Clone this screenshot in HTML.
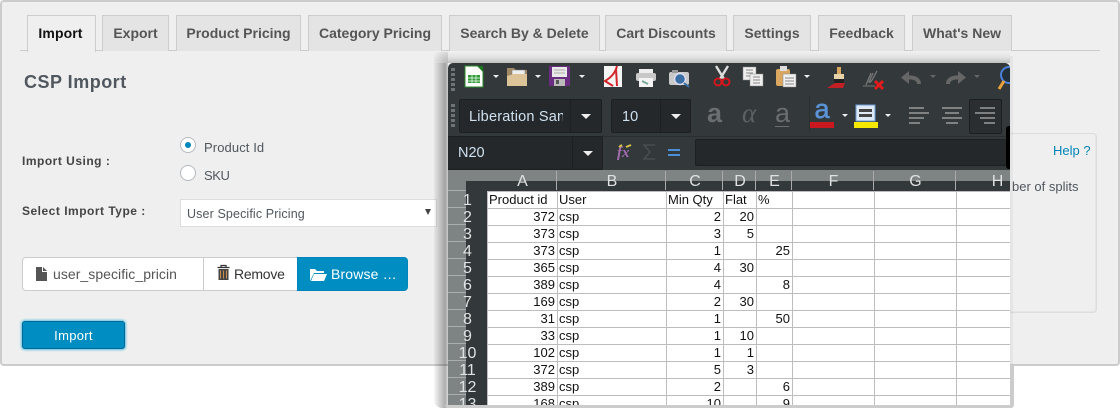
<!DOCTYPE html>
<html><head><meta charset="utf-8"><style>
*{box-sizing:border-box}
html,body{margin:0;padding:0;width:1120px;height:409px;overflow:hidden;background:#fff;font-family:"Liberation Sans",sans-serif}
.a{position:absolute;white-space:nowrap}
#panel{left:0;top:0;width:1120px;height:366px;background:#efefef;border:2px solid #ccc;border-radius:4px}
.tab{position:absolute;top:15px;height:36px;background:#e4e4e4;border:1px solid #ccc;border-bottom:none;font-weight:bold;font-size:14px;color:#555;text-align:center;line-height:34px}
.t{color:#50575e;font-size:13px}
.b{font-weight:bold;font-size:12px;color:#444;letter-spacing:.5px}
.radio{position:absolute;width:16px;height:16px;border-radius:50%;background:#fff;border:1px solid #b4b9be}
#win{left:448px;top:63px;width:562px;height:342px;background:#33383b;overflow:hidden;border-radius:5px 5px 0 0}
table{border-collapse:collapse;table-layout:fixed;position:absolute;left:39px;top:128px;background:#fff;font-size:13px;color:#111}
td{border:1px solid #bdbdbd;height:17px;padding:0 1px;line-height:14px;overflow:hidden;white-space:nowrap}
td.r{text-align:right;padding-right:2px}
.hc{position:absolute;top:108px;color:#dfe2e2;font-size:16px;text-align:center;height:19px;line-height:21px;border-right:1px solid #aaa;padding-left:2px}
.rn{position:absolute;left:0;width:39px;height:17px;text-align:center;color:#dfe2e2;font-size:16px;line-height:18px}
.dark{background:#24282b;border:1px solid #1c2022;border-radius:2px;color:#cfe0ef;font-size:14px;position:absolute}
.ar{position:absolute;width:0;height:0;border-left:3px solid transparent;border-right:3px solid transparent;border-top:3px solid #eee}
.ar2{position:absolute;width:0;height:0;border-left:5px solid transparent;border-right:5px solid transparent;border-top:5px solid #eee}
svg{position:absolute;overflow:visible}
</style></head><body>
<div class="a" id="panel"></div>
<div class="a" style="left:20px;top:50px;width:1080px;height:1px;background:#ccc"></div>
<div class="tab" style="left:27px;width:69px;background:#efefef;color:#111;height:37px;z-index:2;padding-right:2px;letter-spacing:.1px">Import</div>
<div class="tab" style="left:102px;width:67px">Export</div>
<div class="tab" style="left:176px;width:125px">Product Pricing</div>
<div class="tab" style="left:308px;width:134px">Category Pricing</div>
<div class="tab" style="left:449px;width:151px">Search By &amp; Delete</div>
<div class="tab" style="left:605px;width:122px">Cart Discounts</div>
<div class="tab" style="left:733px;width:78px">Settings</div>
<div class="tab" style="left:818px;width:87px">Feedback</div>
<div class="tab" style="left:912px;width:100px">What's New</div>

<div class="a" style="left:24px;top:72px;font-size:18px;font-weight:bold;color:#50575e;letter-spacing:.5px">CSP Import</div>
<div class="a b" style="left:22px;top:154px">Import Using :</div>
<div class="radio" style="left:180px;top:137px"></div>
<div class="a" style="left:185px;top:142px;width:6px;height:6px;border-radius:50%;background:#0085ba"></div>
<div class="a t" style="left:204px;top:140px;letter-spacing:.1px">Product Id</div>
<div class="radio" style="left:180px;top:165px"></div>
<div class="a t" style="left:204px;top:168px;letter-spacing:-.4px">SKU</div>
<div class="a b" style="left:22px;top:204px">Select Import Type :</div>
<div class="a" style="left:180px;top:199px;width:257px;height:28px;background:#fff;border:1px solid #ddd"></div>
<div class="a" style="left:187px;top:207px;font-size:12.5px;color:#50575e;letter-spacing:.12px">User Specific Pricing</div>
<div class="a" style="left:425px;top:209px;width:0;height:0;border-left:3px solid transparent;border-right:3px solid transparent;border-top:6px solid #444"></div>

<div class="a" style="left:22px;top:257px;width:182px;height:34px;background:#fff;border:1px solid #ccc;border-radius:4px 0 0 4px"></div>
<svg style="left:36px;top:267px" width="11" height="14"><path d="M0 0H6V5H11V14H0Z" fill="#555"/><path d="M7 0L11 4H7Z" fill="#555"/></svg>
<div class="a" style="left:53px;top:266px;font-size:14px;color:#555;letter-spacing:.05px">user_specific_pricin</div>
<div class="a" style="left:203px;top:257px;width:95px;height:34px;background:#fff;border:1px solid #ccc"></div>
<svg style="left:217px;top:265px" width="13" height="15"><path d="M4 2V0.5H9V2M0.5 2.5H12.5" stroke="#333" fill="none" stroke-width="1.2"/><path d="M1.5 4H11.5V15H1.5Z" fill="#444"/><path d="M3.5 5.5V13.5M6.5 5.5V13.5M9.5 5.5V13.5" stroke="#c98a4a" stroke-width="1"/></svg>
<div class="a" style="left:234px;top:266px;font-size:14px;color:#333;letter-spacing:-.25px">Remove</div>
<div class="a" style="left:297px;top:257px;width:111px;height:34px;background:#008ec2;border:1px solid #0086b8;border-radius:0 4px 4px 0"></div>
<svg style="left:310px;top:268px" width="17" height="13"><path d="M0 13V1H5L7 3H14V5H4Z" fill="#fff"/><path d="M4 6H17L14 13H1Z" fill="#fff"/></svg>
<div class="a" style="left:331px;top:266px;font-size:14px;color:#fff;letter-spacing:.15px">Browse …</div>

<div class="a" style="left:22px;top:321px;width:103px;height:28px;background:#008ec2;border:1px solid #006799;border-radius:3px;box-shadow:0 0 2px 1px #5bc0de;color:#fff;font-size:13px;text-align:center;line-height:27px;letter-spacing:.3px">Import</div>

<div class="a" style="left:1010px;top:133px;width:87px;height:180px;border:1px solid #ddd;border-left:none;border-radius:0 4px 4px 0;box-shadow:inset -1px -1px 0 #e6e6e6"></div>
<div class="a" style="left:1053px;top:143px;font-size:13px;color:#0085ba">Help ?</div>
<div class="a" style="left:1012px;top:179px;font-size:13px;color:#50575e">ber of splits</div>

<!-- soft screenshot shadow / border -->
<div class="a" style="left:448px;top:52px;width:562px;height:11px;background:linear-gradient(to bottom,rgba(0,0,0,0),rgba(0,0,0,.06) 50%,rgba(0,0,0,.2))"></div>
<div class="a" style="left:434px;top:52px;width:14px;height:11px;background:radial-gradient(circle at 100% 100%,rgba(0,0,0,.24),rgba(0,0,0,0) 95%)"></div>
<div class="a" style="left:434px;top:63px;width:14px;height:345px;border-radius:0 0 0 8px;background:linear-gradient(to right,rgba(0,0,0,.03),rgba(0,0,0,.14) 30%,rgba(0,0,0,.32) 80%,rgba(0,0,0,.14))"></div>
<div class="a" style="left:1010px;top:56px;width:3px;height:310px;background:rgba(0,0,0,.04)"></div>
<div class="a" style="left:1010px;top:365px;width:4px;height:40px;background:#ccc"></div>
<div class="a" style="left:445px;top:405px;width:569px;height:3px;background:#ccc;border-radius:0 0 4px 4px"></div>

<div class="a" id="win">
  <div class="a" style="left:3px;top:5px;width:4px;height:24px;background:repeating-linear-gradient(#6e7476 0 3px,#33383b 3px 5px)"></div>
  <div class="a" style="left:3px;top:41px;width:4px;height:24px;background:repeating-linear-gradient(#6e7476 0 3px,#33383b 3px 5px)"></div>

  <!-- row 1 icons -->
  <svg style="left:17px;top:3px" width="18" height="21"><path d="M0 0H13L18 5V21H0Z" fill="#fff" stroke="#2a8a2a"/><path d="M12 0L18 6V0Z" fill="#1c7a1c"/><rect x="3" y="9" width="12" height="8" fill="#2f9b35"/><path d="M3 12H15M3 15H15M7 9V17M11 9V17" stroke="#fff" stroke-width=".7"/></svg>
  <div class="ar" style="left:45px;top:12px"></div>
  <svg style="left:59px;top:4px" width="20" height="19"><path d="M0 1H7L9 3H20V19H0Z" fill="#a08a66"/><rect x="5" y="3" width="13" height="6" fill="#eee" stroke="#777" stroke-width=".5"/><path d="M0 19V9L7 7H20V19Z" fill="#dcc498"/></svg>
  <div class="ar" style="left:87px;top:12px"></div>
  <svg style="left:101px;top:3px" width="21" height="20"><rect width="21" height="20" rx="1" fill="#6a2d82"/><rect x="3" y="1" width="15" height="10" fill="#e9e9e9"/><path d="M5 4H16M5 7H16" stroke="#aaa"/><rect x="5" y="13" width="11" height="7" fill="#bbb"/><rect x="7" y="14" width="3" height="4" fill="#555"/></svg>
  <div class="ar" style="left:131px;top:12px"></div>
  <svg style="left:156px;top:3px" width="18" height="21"><rect width="18" height="21" fill="#f4f4f4"/><path d="M13 0C11 8 6 12 1 15L9 20M12 3L13 20" fill="none" stroke="#d3262b" stroke-width="2"/></svg>
  <svg style="left:188px;top:6px" width="20" height="18"><rect x="3" y="0" width="14" height="5" fill="#eee"/><rect x="0" y="4" width="20" height="8" rx="2" fill="#c8c8c8"/><rect x="3" y="9" width="14" height="9" fill="#f4f4f4"/><path d="M6 12L12 15" stroke="#7a9" stroke-width="2"/></svg>
  <svg style="left:221px;top:7px" width="20" height="17"><rect y="2" width="20" height="13" rx="2" fill="#c9c9c9"/><rect x="3" y="0" width="6" height="3" fill="#999"/><circle cx="11" cy="9" r="5.5" fill="#3a6ea5" stroke="#dde" stroke-width="1.5"/><path d="M15 13L20 17" stroke="#3a6ea5" stroke-width="2"/></svg>
  <svg style="left:265px;top:3px" width="18" height="21"><path d="M3 0L11 13M15 0L7 13" stroke="#ddd" stroke-width="2.4"/><circle cx="5" cy="16" r="3.5" fill="none" stroke="#d3161c" stroke-width="2"/><circle cx="13" cy="16" r="3.5" fill="none" stroke="#d3161c" stroke-width="2"/></svg>
  <svg style="left:295px;top:4px" width="20" height="20"><rect width="13" height="13" fill="#eee" stroke="#888" stroke-width=".5"/><path d="M3 3H10M3 6H10M3 9H10" stroke="#888"/><rect x="7" y="7" width="13" height="12" fill="#eee" stroke="#888" stroke-width=".5"/><path d="M10 10H17M10 13H17M10 16H17" stroke="#888"/></svg>
  <svg style="left:328px;top:3px" width="20" height="21"><rect y="3" width="14" height="17" rx="2" fill="#d9a760"/><rect x="4" y="0" width="7" height="5" fill="#ddd"/><rect x="7" y="8" width="13" height="13" fill="#f0f0f0" stroke="#888" stroke-width=".5"/><path d="M9 12H18M9 15H18M9 18H18" stroke="#888"/></svg>
  <div class="ar" style="left:356px;top:12px"></div>
  <svg style="left:379px;top:4px" width="21" height="21"><rect x="10" y="0" width="4" height="8" fill="#d9a760"/><rect x="7" y="7" width="10" height="5" fill="#e8d3a8"/><rect x="7" y="12" width="10" height="4" fill="#222"/><path d="M0 21L8 16H18L16 21Z" fill="#c32025"/></svg>
  <svg style="left:415px;top:7px" width="21" height="20"><path d="M3 15L8 3M10 3L6 12C8 14 12 4 14 1" stroke="#777" fill="none" stroke-width="1.3"/><path d="M0 16H12" stroke="#777"/><path d="M12 11L20 19M20 11L12 19" stroke="#e31b1b" stroke-width="3"/></svg>
  <svg style="left:453px;top:8px" width="21" height="13"><path d="M18 13C18 8 13 6 6 6.5" stroke="#666" stroke-width="4" fill="none"/><path d="M0 6.5L8 0V13Z" fill="#666"/></svg>
  <div class="ar" style="left:482px;top:12px;border-top-color:#666"></div>
  <svg style="left:497px;top:8px" width="21" height="13"><path d="M3 13C3 8 8 6 15 6.5" stroke="#666" stroke-width="4" fill="none"/><path d="M21 6.5L13 0V13Z" fill="#666"/></svg>
  <div class="ar" style="left:526px;top:12px;border-top-color:#666"></div>
  <svg style="left:550px;top:3px" width="14" height="24"><circle cx="11" cy="9" r="8" fill="#23303a" stroke="#4a7fd8" stroke-width="2"/><path d="M6 15L1 23" stroke="#e9a23b" stroke-width="3"/></svg>

  <!-- row 2 -->
  <div class="dark" style="left:11px;top:36px;width:143px;height:34px;padding:9px 0 0 9px;font-size:14.5px;letter-spacing:.2px;overflow:hidden"><span style="display:block;width:94px;overflow:hidden">Liberation Sans</span></div>
  <div class="a" style="left:122px;top:36px;width:1px;height:34px;background:#1c2022"></div>
  <div class="ar2" style="left:133px;top:51px"></div>
  <div class="dark" style="left:163px;top:36px;width:80px;height:34px;padding:9px 0 0 10px;font-size:14.5px">10</div>
  <div class="a" style="left:212px;top:36px;width:1px;height:34px;background:#1c2022"></div>
  <div class="ar2" style="left:223px;top:51px"></div>
  <div class="a" style="left:259px;top:35px;font-size:27px;font-weight:bold;color:#6a6e70;line-height:30px">a</div>
  <div class="a" style="left:294px;top:35px;font-size:27px;font-style:italic;color:#5c6163;font-family:'Liberation Serif',serif;line-height:30px">α</div>
  <div class="a" style="left:327px;top:35px;font-size:27px;color:#6a6e70;line-height:30px">a</div>
  <div class="a" style="left:327px;top:63px;width:14px;height:1px;background:#6a6e70"></div>
  <div class="a" style="left:361px;top:33px;width:1px;height:36px;background:#2a2f32"></div>
  <div class="a" style="left:362px;top:31px;font-size:27px;font-weight:normal;color:#5a93d6;width:24px;text-align:center;line-height:30px;-webkit-text-stroke:.6px #5a93d6">a</div>
  <div class="a" style="left:362px;top:59px;width:24px;height:6px;background:#c9181e"></div>
  <div class="ar" style="left:394px;top:51px"></div>
  <svg style="left:408px;top:42px" width="19" height="16"><rect width="19" height="16" fill="#dfe9f5" stroke="#6ea0d8"/><rect x="3" y="4" width="13" height="3" fill="#444"/><rect x="3" y="9" width="13" height="3" fill="#444"/></svg>
  <div class="a" style="left:406px;top:59px;width:24px;height:6px;background:#f5e800"></div>
  <div class="ar" style="left:437px;top:51px"></div>
  <svg style="left:461px;top:44px" width="20" height="17"><path d="M0 1H15M0 6H20M0 11H15M0 16H11" stroke="#9a9a9a" stroke-width="1.5"/></svg>
  <svg style="left:494px;top:44px" width="20" height="17"><path d="M0 1H20M3 6H17M0 11H20M4 16H16" stroke="#9a9a9a" stroke-width="1.5"/></svg>
  <div class="a" style="left:521px;top:36px;width:33px;height:35px;background:#2a2e31;border:1px solid #1b1f21;border-radius:2px"></div>
  <svg style="left:527px;top:44px" width="20" height="17"><path d="M5 1H20M0 6H20M5 11H20M9 16H20" stroke="#9a9a9a" stroke-width="1.5"/></svg>

  <!-- row 3 -->
  <div class="a" style="left:0;top:73px;width:562px;height:1px;background:#2a2e31"></div>
  <div class="dark" style="left:-2px;top:73px;width:157px;height:34px;padding:8px 0 0 11px;font-size:14.5px;border-radius:0 2px 2px 0">N20</div>
  <div class="a" style="left:124px;top:73px;width:1px;height:34px;background:#1c2022"></div>
  <div class="ar2" style="left:135px;top:88px"></div>
  <div class="a" style="left:169px;top:80px;font-size:15px;font-style:italic;color:#a46cb0;font-family:'Liberation Serif',serif;font-weight:bold;line-height:20px">fx</div>
  <svg style="left:168px;top:81px" width="16" height="8"><path d="M10 3L15 1M3 3L6 1" stroke="#d9c24a" stroke-width="2"/></svg>
  <svg style="left:195px;top:81px" width="12" height="16"><path d="M12 1H1L7 8L1 15H12" fill="none" stroke="#4c5153" stroke-width="1.3"/></svg>
  <svg style="left:220px;top:86px" width="12" height="7"><path d="M0 1H12M0 6H12" stroke="#4a8fd8" stroke-width="2"/></svg>
  <div class="a" style="left:247px;top:76px;width:315px;height:27px;background:#24282b;border:1px solid #1c2022;border-radius:2px"></div>
  <div class="a" style="left:558px;top:63px;width:4px;height:43px;background:#000;border-radius:3px 0 0 3px"></div>

  <!-- sheet headers -->
  <div class="a" style="left:0;top:107px;width:562px;height:11px;background:#7e8383"></div>
  <div class="a" style="left:18px;top:118px;width:544px;height:10px;background:#33383b"></div>
  <div class="a" style="left:0;top:107px;width:18px;height:235px;background:repeating-linear-gradient(to bottom,#7e8383 0 16px,#a9adad 16px 17px);background-position:0 4px"></div>
  <div class="hc" style="left:39px;width:70px">A</div>
  <div class="hc" style="left:109px;width:109px">B</div>
  <div class="hc" style="left:218px;width:57px">C</div>
  <div class="hc" style="left:275px;width:33px">D</div>
  <div class="hc" style="left:308px;width:36px">E</div>
  <div class="hc" style="left:344px;width:82px">F</div>
  <div class="hc" style="left:426px;width:82px">G</div>
  <div class="hc" style="left:508px;width:82px">H</div>

  <div class="rn" style="top:129px">1</div><div class="rn" style="top:146px">2</div><div class="rn" style="top:163px">3</div><div class="rn" style="top:180px">4</div><div class="rn" style="top:197px">5</div><div class="rn" style="top:214px">6</div><div class="rn" style="top:231px">7</div><div class="rn" style="top:248px">8</div><div class="rn" style="top:265px">9</div><div class="rn" style="top:282px">10</div><div class="rn" style="top:299px">11</div><div class="rn" style="top:316px">12</div><div class="rn" style="top:333px">13</div>

  <table style="width:551px">
  <colgroup><col style="width:70px"><col style="width:109px"><col style="width:57px"><col style="width:33px"><col style="width:36px"><col style="width:82px"><col style="width:82px"><col style="width:82px"></colgroup>
  <tr><td>Product id</td><td>User</td><td>Min Qty</td><td>Flat</td><td>%</td><td></td><td></td><td></td></tr>
  <tr><td class="r">372</td><td>csp</td><td class="r">2</td><td class="r">20</td><td></td><td></td><td></td><td></td></tr>
  <tr><td class="r">373</td><td>csp</td><td class="r">3</td><td class="r">5</td><td></td><td></td><td></td><td></td></tr>
  <tr><td class="r">373</td><td>csp</td><td class="r">1</td><td></td><td class="r">25</td><td></td><td></td><td></td></tr>
  <tr><td class="r">365</td><td>csp</td><td class="r">4</td><td class="r">30</td><td></td><td></td><td></td><td></td></tr>
  <tr><td class="r">389</td><td>csp</td><td class="r">4</td><td></td><td class="r">8</td><td></td><td></td><td></td></tr>
  <tr><td class="r">169</td><td>csp</td><td class="r">2</td><td class="r">30</td><td></td><td></td><td></td><td></td></tr>
  <tr><td class="r">31</td><td>csp</td><td class="r">1</td><td></td><td class="r">50</td><td></td><td></td><td></td></tr>
  <tr><td class="r">33</td><td>csp</td><td class="r">1</td><td class="r">10</td><td></td><td></td><td></td><td></td></tr>
  <tr><td class="r">102</td><td>csp</td><td class="r">1</td><td class="r">1</td><td></td><td></td><td></td><td></td></tr>
  <tr><td class="r">372</td><td>csp</td><td class="r">5</td><td class="r">3</td><td></td><td></td><td></td><td></td></tr>
  <tr><td class="r">389</td><td>csp</td><td class="r">2</td><td></td><td class="r">6</td><td></td><td></td><td></td></tr>
  <tr><td class="r">168</td><td>csp</td><td class="r">10</td><td></td><td class="r">9</td><td></td><td></td><td></td></tr>
  </table>
</div>
</body></html>
